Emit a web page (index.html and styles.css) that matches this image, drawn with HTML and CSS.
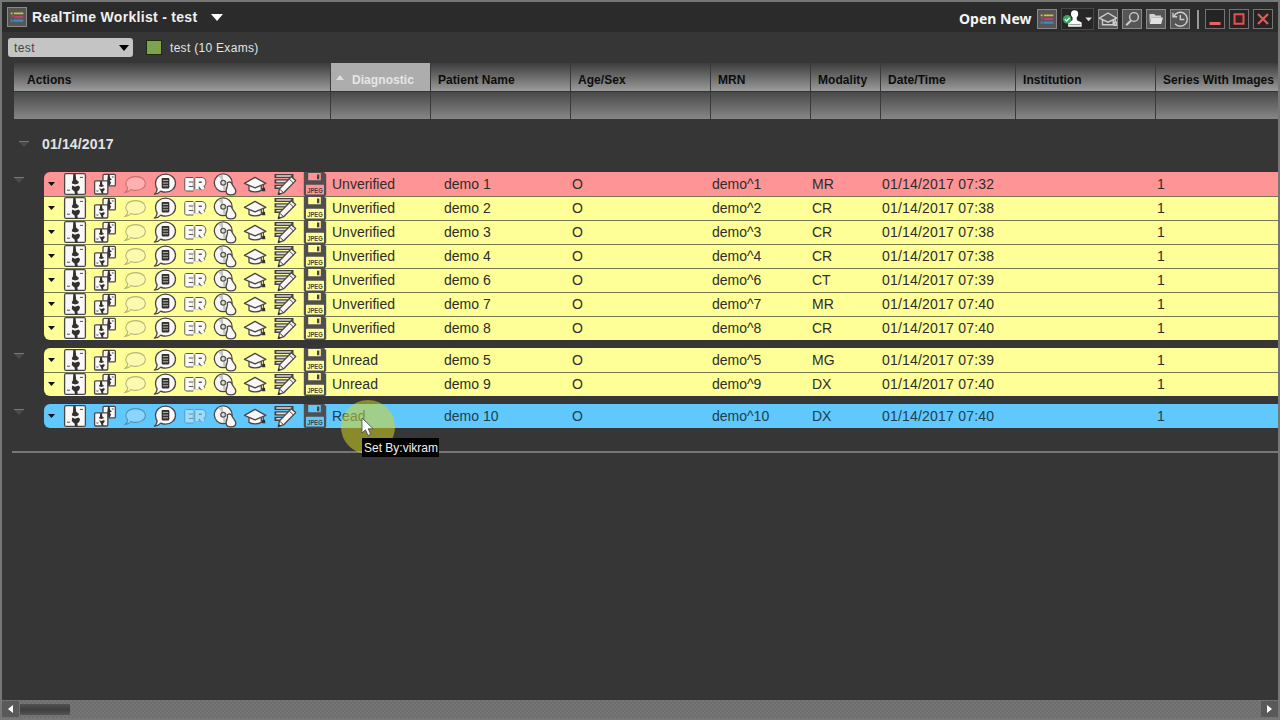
FILE: index.html
```html
<!DOCTYPE html>
<html lang="en">
<head>
<meta charset="utf-8">
<title>RealTime Worklist - test</title>
<link rel="stylesheet" href="styles.css">
</head>
<body>
<svg class="sprite" aria-hidden="true">
  <defs>
    <symbol id="i-xray" viewBox="0 0 24 24">
      <rect class="paper" x="1.6" y="1.6" width="20.8" height="20.8" rx="1.5"/>
      <path class="ink" d="M10.300 2h2.300l.6 5.800 2.600 1.900-.5 1.900-3 .8-3.300-.8-.2-1.600 1.100-1.600z"/>
      <path class="ink" d="M9.200 13.600l2.800 1.100 3.300-1.200 1.800 1.600-.9 2.800-1.800 1.400.3 3.100h-2.600l-.6-3-2.800-2.300z"/>
      <path class="thin" d="M17 5.400h3M4 18.200h3"/>
    </symbol>
    <symbol id="i-compare" viewBox="0 0 24 24">
      <rect class="paper" x="10" y="2.4" width="12.4" height="11.5" rx="1"/>
      <path class="ink" d="M15 2.500h1.600l.5 3.600 1.800 1.300-2.200 1.200 1.300 2-1.200 2.800h-1.600l-1.100-4z"/>
      <rect class="paper" x="1.6" y="8.800" width="13.2" height="13.2" rx="1"/>
      <path class="ink" d="M7.200 9h1.700l.5 3.600 1.800 1.400-2.700 1-2.700-.8 1.100-1.800zM6 16.300l2.500.6 2.500-.8.8 1.400-1.600 1.800.1 2.500H8.700l-.8-2.600z"/>
      <path class="thin" d="M18.700 5h2M3.400 19h2"/>
    </symbol>
    <symbol id="i-bubble" viewBox="0 0 24 24">
      <path class="ghost" d="M12.600 4.600c5.600 0 9.800 2.800 9.800 6.800s-4.200 7-9.800 7c-1.700 0-3.200-.3-4.500-.9-1.400 1.600-3.200 2.600-5.900 2.900 1.600-1.300 2.400-2.800 2.600-4.400C3.500 14.700 2.800 13.200 2.800 11.400c0-4 4.200-6.800 9.800-6.800z"/>
    </symbol>
    <symbol id="i-report" viewBox="0 0 24 24">
      <path class="paper" d="M12.500 2.200c5.500 0 10 3.900 10 9s-4.500 9-10 9c-1.700 0-3.300-.4-4.700-1.100-1.500 1.700-3.500 2.800-6.400 3.100 1.700-1.400 2.600-3.200 2.800-5.100-1.100-1.600-1.700-3.700-1.700-5.900 0-5.100 4.500-9 10-9z"/>
      <rect class="ink" x="8.700" y="6" width="7.600" height="10.400" rx=".8"/>
      <path class="lines" d="M10 8.400h5M10 11.100h5M10 13.800h5"/>
    </symbol>
    <symbol id="i-er" viewBox="0 0 24 24">
      <path class="er-out" d="M10.300 7.800H4v9h6.300M4 12.300h5.800M14 17.200V7.800h4.300c3.200 0 3.200 5 0 5H14.500M17.300 13l3 4"/>
      <path class="er-in" d="M10.300 7.800H4v9h6.300M4 12.300h5.800M14 17.200V7.800h4.300c3.200 0 3.200 5 0 5H14.500M17.300 13l3 4"/>
    </symbol>
    <symbol id="i-disc" viewBox="0 0 24 24">
      <circle class="paper" cx="10.200" cy="10.800" r="8.900"/>
      <path class="sheen" d="M10.200 10.800L5.500 3.800 10 2.600zM10.200 10.800l4.300 7.400-4.300.8z"/>
      <circle class="hole" cx="10.200" cy="10.800" r="2.400"/>
      <path class="paper" d="M14.400 10.800c1.500-1.300 3.100-1 4.200.4.600 3.200 4.200 4.600 4.200 7.800 0 2.500-1.900 3.900-4.900 3.900s-4.800-1.600-4.800-3.900c0-2.900 2.100-4.900 1.300-8.200z"/>
    </symbol>
    <symbol id="i-cap" viewBox="0 0 24 24">
      <path class="paper" d="M6 12v6.400c3 2 9 2 12.300 0V12z"/>
      <path class="paper" d="M12 5.400l10.800 6L12 15.900 1.400 11.400z"/>
      <path class="thin" d="M20.500 12.400v4"/><path class="ink" d="M19.300 15.700h2.600l.5 3.500h-3.500z"/>
    </symbol>
    <symbol id="i-edit" viewBox="0 0 24 24">
      <path class="bars" d="M1.500 4h19M1.500 9.400h14M1.500 14.800h8.500"/>
      <path class="bars-in" d="M3.300 4h15M3.300 9.400h11M3.300 14.800h6"/>
      <path class="paper" d="M18.300 4.700l4.400 3.900-12 12.100-5.400 2 1.200-5.800z"/>
      <path class="thin" d="M16.200 7l4.200 3.900M6.700 17.200l4 3.500"/><path class="ink" d="M5 23l.8-3 2 2z"/>
    </symbol>
    <symbol id="i-jpeg" viewBox="0 0 24 24">
      <path class="floppy" d="M.8 0h20.400l2 2.400V22.500l-1 1.500H1.800l-1-1.500z"/>
      <path class="window" d="M5.200 1h12.600v7.300H5.200z"/><path class="slot" d="M14 2.600h2.300v4.600H14z"/>
      <rect class="window" x="3" y="12.800" width="18" height="9.800" rx=".6"/>
      <text class="jpeg" x="12" y="20.500" text-anchor="middle" textLength="15.500" lengthAdjust="spacingAndGlyphs">JPEG</text>
    </symbol>
    <symbol id="i-list" viewBox="0 0 20 20">
      <path d="M3 6h2M6.500 6H17" stroke="#d2c13b" stroke-width="2"/>
      <path d="M4 9h2M7 10H17" stroke="#bd3f75" stroke-width="2.400"/>
      <path d="M3 14h2M6 14H17" stroke="#388ac8" stroke-width="2.400"/>
    </symbol>
  </defs>
</svg>

<div class="window-frame">
  <header class="titlebar">
    <span class="tool"><svg viewBox="0 0 20 20"><use href="#i-list"/></svg></span>
    <h1 class="title">RealTime Worklist - test</h1>
    <svg class="title-arrow" viewBox="0 0 12 7"><path d="M0 0h12L6 7z"/></svg>
    <div class="tools">
      <span class="open-new">Open New</span>
      <span class="tool"><svg viewBox="0 0 20 20"><use href="#i-list"/></svg></span>
      <span class="tool stamp">
        <svg viewBox="1 1 30 19"><circle cx="13.200" cy="5.600" r="3.500" fill="#fff"/><path d="M11.300 8h3.800l.3 3.600 4.600 2.400v4H7v-4l4.100-2.400z" fill="#fff"/><path d="M8 16h11" stroke="#888"/><circle cx="6" cy="10.800" r="4.100" fill="#3aa35c"/><path d="M3.800 10.800l1.700 1.700 2.800-3.200" fill="none" stroke="#eee" stroke-width="1.300"/><path d="M23.500 9h6.600L26.800 12.600z" fill="#ddd"/></svg>
      </span>
      <span class="tool"><svg viewBox="1 1 18 18" class="line-icon"><path d="M10 4l8.600 5.200-8.600 4-8.700-4zM4.500 11v4.800h10.700V11M17.200 10v3M16.300 13.200h2v3h-2z"/></svg></span>
      <span class="tool"><svg viewBox="1 1 18 18" class="line-icon"><circle cx="12" cy="8" r="4.400"/><path d="M9 11.500l-4.800 4.700" stroke-width="2"/></svg></span>
      <span class="tool"><svg viewBox="1 1 18 18"><path d="M3.500 5h4.700l1.300 1.600H15v2H5.300L3.500 14z" fill="#d4d4d4"/><path d="M5.300 8.600H17L15.200 15H3.800z" fill="#e2e2e2"/></svg></span>
      <span class="tool"><svg viewBox="1 1 18 18" class="line-icon"><path d="M4 7.200A7 7 0 1 1 5 14.800M3 3.700v4h4.200M10.300 6v4.500h4"/></svg></span>
      <span class="divider"></span>
      <span class="tool dark"><svg viewBox="1 1 18 18"><path d="M4.500 13h11v3h-11z" fill="#e26463"/></svg></span>
      <span class="tool dark"><svg viewBox="1 1 18 18"><path d="M5.500 5.200h9v9.600h-9z" fill="#3a2020" stroke="#e05353" stroke-width="2"/></svg></span>
      <span class="tool dark"><svg viewBox="1 1 18 18"><path d="M5 5l10 10M15 5L5 15" stroke="#dc5c5a" stroke-width="2.300"/></svg></span>
    </div>
  </header>

  <div class="filterbar">
    <div class="select"><span>test</span><svg viewBox="0 0 10 6"><path d="M0 0h10L5 6z"/></svg></div>
    <span class="swatch"></span>
    <span class="exam-count">test (10 Exams)</span>
  </div>

  <div class="table-head">
    <div class="head-cell">Actions</div>
    <div class="head-cell sorted"><svg viewBox="0 0 8 5"><path d="M4 0l4 5H0z"/></svg>Diagnostic</div>
    <div class="head-cell">Patient Name</div>
    <div class="head-cell">Age/Sex</div>
    <div class="head-cell">MRN</div>
    <div class="head-cell">Modality</div>
    <div class="head-cell">Date/Time</div>
    <div class="head-cell">Institution</div>
    <div class="head-cell last">Series With Images</div>
  </div>
  <div class="table-head filters">
    <div class="head-cell"></div><div class="head-cell"></div><div class="head-cell"></div><div class="head-cell"></div><div class="head-cell"></div><div class="head-cell"></div><div class="head-cell"></div><div class="head-cell"></div><div class="head-cell"></div>
  </div>

  <main class="list">
    <div class="day"><svg class="toggle" viewBox="0 0 10 6"><path d="M0 .7h10L5 6z"/><path class="edge" d="M0 .5h10"/></svg>01/14/2017</div>
    <div id="groups"></div>
    <div class="rule"></div>
  </main>

  <footer class="scrollbar">
    <span class="scroll-btn"><svg viewBox="0 0 5 8"><path d="M5 0v8L0 4z"/></svg></span>
    <span class="thumb"></span>
    <span class="scroll-btn end"><svg viewBox="0 0 5 8"><path d="M0 0v8l5-4z"/></svg></span>
  </footer>
</div>

<div class="halo"></div>
<div class="tooltip">Set By:vikram</div>
<svg class="cursor" viewBox="0 0 13 20"><path d="M1 1v15l3.500-3.200L7 18.500l2.700-1.200-2.500-5.500h5z"/></svg>
<script src="script.js"></script>
</body>
</html>
```

FILE: styles.css
```css
* { box-sizing: border-box; }
body {
  margin: 0;
  width: 1280px;
  height: 720px;
  overflow: hidden;
  background: #363636;
  color: #e4e4e4;
  font-family: "Liberation Sans", Arial, sans-serif;
  font-size: 14px;
}
.sprite { position: absolute; width: 0; height: 0; }
.window-frame {
  display: flex;
  flex-direction: column;
  height: 720px;
  border: 2px solid #777;
  background: #363636;
}

.titlebar {
  display: flex;
  align-items: center;
  flex: none;
  height: 30px;
  padding: 0 5px 0 5px;
  background: #2b2b2b;
}
.title {
  margin: 0 0 0 5px;
  width: 166px;
  font-size: 14px;
  line-height: 30px;
  letter-spacing: 0.3px;
  white-space: nowrap;
  color: #f0f0f0;
}
.title-arrow { width: 12px; height: 7px; margin-left: 13px; fill: #fff; }
.tools { display: flex; align-items: center; gap: 4px; margin-left: auto; padding-top: 4px; }
.open-new {
  width: 74px;
  font: bold 14px/20px "Noto Sans", sans-serif;
  white-space: nowrap;
  color: #f4f4f4;
}
.tool {
  display: flex;
  width: 20px;
  height: 20px;
  border: 1px solid #8a8a8a;
  background: #565656;
}
.tool svg { width: 100%; height: 100%; }
.stamp { width: 33px; height: 22px; border-color: #484848; background: #262626; }
.dark { border-color: #747474; background: #242424; }
.divider { width: 2px; height: 19px; margin: 0 2px 0 3px; background: #999; }
.line-icon { fill: none; stroke: #cdcdcd; stroke-width: 1.4; }

.filterbar { display: flex; align-items: center; flex: none; height: 31px; padding-left: 6px; }
.select {
  display: flex;
  align-items: center;
  justify-content: space-between;
  width: 125px;
  height: 19px;
  padding: 0 4px 0 6px;
  border-radius: 3px;
  background: #c4c4c4;
  color: #444;
  font-size: 12px;
  letter-spacing: 0.4px;
}
.select svg { width: 10px; height: 6px; fill: #000; }
.swatch { width: 16px; height: 15px; margin: 0 8px 0 13px; border: 1px solid #1e2a12; background: #7ea34c; }
.exam-count { font-size: 12px; letter-spacing: 0.3px; }

.table-head {
  display: grid;
  flex: none;
  grid-template-columns: 317px 100px 140px 140px 100px 70px 135px 140px 1fr;
  height: 28px;
  margin-left: 12px;
  background: linear-gradient(#3c3c3c, #9b9b9b);
  color: #0d0d0d;
  font-size: 12px;
  font-weight: bold;
  line-height: 34px;
  letter-spacing: 0.06px;
}
.filters { height: 28px; background: linear-gradient(#494949, #868686); border-top: 1px solid #333; }
.head-cell { padding-left: 7px; border-right: 1px solid #3a3a3a; white-space: nowrap; overflow: hidden; }
.head-cell:first-child { padding-left: 13px; }
.head-cell:last-child { border-right: 0; }
.sorted {
  display: flex;
  gap: 8px;
  padding-left: 5px;
  background: #adadad;
  color: #e6e6e6;
}
.sorted svg { width: 8px; height: 5px; margin-top: 12px; fill: #ddd; }

.list { flex: 1; min-height: 0; padding-top: 13px; }
.day {
  display: flex;
  align-items: center;
  gap: 13px;
  height: 24px;
  padding-left: 17px;
  font-weight: bold;
  letter-spacing: 0.15px;
}
.toggle { width: 10px; height: 6px; fill: #4b4b4b; }
.edge { fill: none; stroke: #777; stroke-width: 1; }
#groups { display: flex; flex-direction: column; gap: 8px; margin-top: 16px; }
.group { display: flex; align-items: flex-start; }
.group .toggle { margin: 5px 20px 0 12px; }
.rows { flex: 1; overflow: hidden; border-radius: 6px 0 0 6px; }
.row {
  display: grid;
  grid-template-columns: 288px 112px 128px 140px 100px 70px 135px 140px 1fr;
  align-items: center;
  height: 24px;
  color: #2e2d2b;
  line-height: 24px;
  white-space: nowrap;
}
.row + .row { box-shadow: inset 0 1px #75794a; }
.row.yellow { background: #feff96; --tint: #feff96; --ghost-fill: #fbfaaf; --ghost-line: #b9b277; }
.row.red { background: #ff9496; --tint: #ff9496; --ghost-fill: #ffb1b2; --ghost-line: #c76f72; }
.row.blue { background: #61c8fe; --tint: #61c8fe; --ghost-fill: #88d6ff; --ghost-line: #568cab; color: #203e4d; }
.date { letter-spacing: 0.2px; }
.actions { display: flex; align-items: center; gap: 6px; height: 24px; padding-left: 4px; }
.menu-arrow { flex: none; width: 7px; height: 4px; margin-right: 2px; fill: #111; }
.actions .icon { flex: none; width: 24px; height: 24px; }

.paper { fill: #faf7f7; stroke: #4c4747; stroke-width: 1.3; stroke-linejoin: round; }
.ink { fill: #333030; }
.thin { fill: none; stroke: #514d4d; stroke-width: 1; }
.lines { stroke: #bbb; stroke-width: 1; }
.ghost { fill: var(--ghost-fill); stroke: var(--ghost-line); stroke-width: 1.1; }
.er-out { fill: none; stroke: #5a5555; stroke-width: 5.4; stroke-linejoin: round; }
.er-in { fill: none; stroke: #fbfbfb; stroke-width: 3.5; }
.blue .faded { opacity: 0.4; }
.sheen { fill: #c7c4c4; }
.hole { fill: #ddd; stroke: #555; stroke-width: 1.3; }
.bars { stroke: #464141; stroke-width: 4.2; }
.bars-in { stroke: #ddd9d9; stroke-width: 1.6; }
.floppy { fill: #514e50; }
.window { fill: var(--tint); }
.slot { fill: #444; }
.jpeg { font: bold 8px "Liberation Sans", sans-serif; fill: #454243; }

.rule { height: 2px; margin: 23px 0 0 10px; background: #777; }

.scrollbar {
  display: flex;
  align-items: center;
  flex: none;
  height: 18px;
  background: repeating-conic-gradient(#6d6d6d 0 25%, #767676 0 50%) 0 0 / 4px 4px;
}
.scroll-btn { display: flex; width: 17px; height: 16px; align-items: center; justify-content: center; background: #595959; }
.scroll-btn svg { width: 5px; height: 8px; fill: #fff; }
.scroll-btn.end { margin-left: auto; }
.thumb { width: 50px; height: 11px; margin-left: 1px; background: linear-gradient(#515151, #3e3e3e 50%, #545454); }

.halo {
  position: absolute;
  left: 341px;
  top: 400px;
  width: 54px;
  height: 54px;
  border-radius: 50%;
  background: rgba(216, 213, 32, 0.53);
}
.tooltip {
  position: absolute;
  left: 362px;
  top: 438px;
  width: 77px;
  height: 19px;
  padding-left: 2px;
  background: #000;
  color: #f0f0f0;
  font-size: 12px;
  line-height: 20px;
  white-space: nowrap;
}
.cursor { position: absolute; left: 361px; top: 417px; width: 13px; height: 20px; fill: #fff; stroke: #444; stroke-width: 0.8; }
```

FILE: script.js
```js
const groups = [
  [
    ["red", "Unverified", 1, "MR", "07:32"],
    ["yellow", "Unverified", 2, "CR", "07:38"],
    ["yellow", "Unverified", 3, "CR", "07:38"],
    ["yellow", "Unverified", 4, "CR", "07:38"],
    ["yellow", "Unverified", 6, "CT", "07:39"],
    ["yellow", "Unverified", 7, "MR", "07:40"],
    ["yellow", "Unverified", 8, "CR", "07:40"]
  ],
  [
    ["yellow", "Unread", 5, "MG", "07:39"],
    ["yellow", "Unread", 9, "DX", "07:40"]
  ],
  [["blue", "Read", 10, "DX", "07:40"]]
];
const icons = ["xray", "compare", "bubble", "report", "er", "disc", "cap", "edit", "jpeg"];

const actions = icons
  .map(name => `<svg class="icon${name === "er" ? " faded" : ""}"><use href="#i-${name}"/></svg>`)
  .join("");

const row = ([tone, status, n, modality, time]) => `
  <div class="row ${tone}">
    <div class="actions"><svg class="menu-arrow" viewBox="0 0 7 4"><path d="M0 0h7L3.500 4z"/></svg>${actions}</div>
    <div>${status}</div><div>demo ${n}</div><div>O</div><div>demo^${n}</div>
    <div>${modality}</div><div class="date">01/14/2017 ${time}</div><div></div><div>1</div>
  </div>`;

document.getElementById("groups").innerHTML = groups
  .map(rows => `
    <div class="group">
      <svg class="toggle" viewBox="0 0 10 6"><path d="M0 .7h10L5 6z"/><path class="edge" d="M0 .5h10"/></svg>
      <div class="rows">${rows.map(row).join("")}</div>
    </div>`)
  .join("");
```
